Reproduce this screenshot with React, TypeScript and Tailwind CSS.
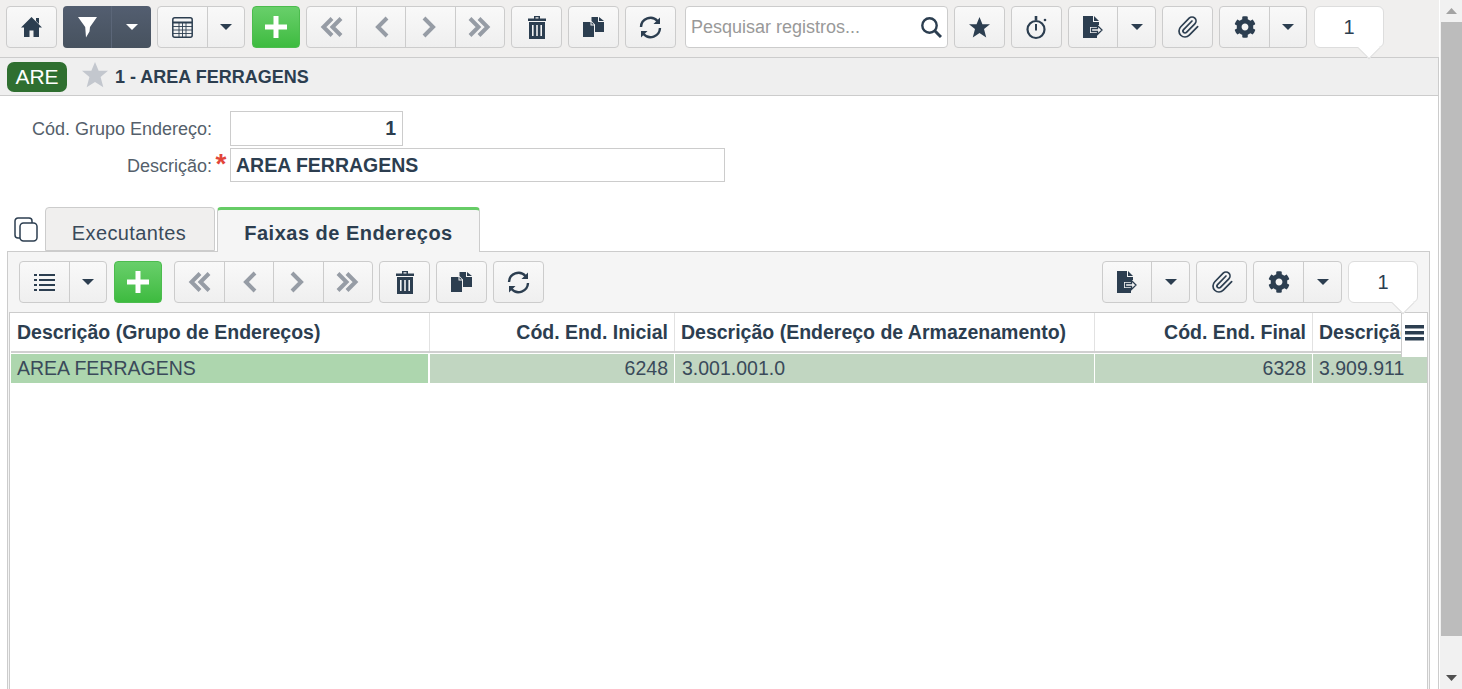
import React from "react";
import { FaCog } from "react-icons/fa";
import { Paperclip } from "lucide-react";

const INK = "#2c3e50";

// toolbar icons that the icon font of the original draws differently
function Home() {
  return (
    <svg width="21" height="20" viewBox="0 0 21 20" fill={INK}>
      <path d="M10.500 0 21 10.500h-3V20h-5.500v-6.500h-4V20H3v-9.500H0z" />
      <path d="M15 1h3v6l-3-3z" />
    </svg>
  );
}
function Funnel() {
  return (
    <svg width="19" height="22" viewBox="0 0 19 22">
      <path d="M0 1h19l-7 10-.5 4.500L8 21.500 7.200 11z" fill="#fff" />
    </svg>
  );
}
function TableIcon() {
  return (
    <svg width="21" height="21" viewBox="0 0 21 21" fill="none" stroke={INK}>
      <rect x="0.800" y="0.800" width="19.400" height="19.400" rx="2" strokeWidth="1.500" />
      <path d="M1 5.500h19" strokeWidth="2" />
      <path d="M1 9.500h19M1 13h19M1 16.500h19M7 6v14M10.500 6v14M14 6v14" strokeWidth="0.900" />
    </svg>
  );
}
function Chevrons({ dir, double }: { dir: "l" | "r"; double?: boolean }) {
  const flip = dir === "r" ? "scale(-1 1) translate(-24 0)" : undefined;
  return (
    <svg width="24" height="22" viewBox="0 0 24 22" fill="none" stroke="#969ca5" strokeWidth="4">
      <g transform={flip}>
        {double ? (
          <>
            <path d="M13 2.500 4.500 11l8.500 8.500" />
            <path d="M22 2.500 13.500 11l8.500 8.500" />
          </>
        ) : (
          <path d="M18 2 9 11l9 9" />
        )}
      </g>
    </svg>
  );
}
function Trash() {
  return (
    <svg width="18" height="23" viewBox="0 0 18 23" fill={INK}>
      <path d="M6 0h6v2.500h6V5H0V2.500h6zM7.500 1.200v1.300h3V1.200z" fillRule="evenodd" />
      <path d="M1 6h16v17H1zM4 9v11h1.600V9zM8.200 9v11h1.600V9zM12.400 9v11H14V9z" fillRule="evenodd" />
    </svg>
  );
}
function Copies() {
  return (
    <svg width="22" height="20" viewBox="0 0 22 20" fill={INK}>
      <path d="M0 5h7.500v3.500H11V20H0z" />
      <path d="M8.500 5 11 7.500H8.500z" />
      <path d="M8.500 0H15v5h6v10h-9V7.500L8.500 4z" />
      <path d="M16 0l5 4h-5z" />
    </svg>
  );
}
function Refresh() {
  return (
    <svg width="23" height="23" viewBox="0 0 23 23" fill="none" stroke={INK} strokeWidth="2.400">
      <path d="M2 11a9.500 9.500 0 0 1 16.500-6" />
      <path d="M21 12a9.500 9.500 0 0 1-16.500 6" />
      <path d="M21 1.500V8h-6.500z" fill={INK} stroke="none" />
      <path d="M2 21.500V15h6.500z" fill={INK} stroke="none" />
    </svg>
  );
}
function Stopwatch() {
  return (
    <svg width="22" height="25" viewBox="0 0 22 25" fill="none" stroke={INK}>
      <circle cx="10" cy="14.500" r="8.500" strokeWidth="2.200" />
      <path d="M10 1v4" strokeWidth="2.600" />
      <path d="M10 9v6.500" strokeWidth="2" />
      <circle cx="19" cy="5" r="1.300" fill={INK} stroke="none" />
    </svg>
  );
}
function ExportDoc() {
  return (
    <svg width="20" height="22" viewBox="0 0 20 22" fill={INK}>
      <path d="M0 0h10v6h6v3h-2v2H7v6h7v5H0z" />
      <path d="M11 0l5 5h-5z" />
      <path d="M8.500 12.500h6V9.500l4.500 4.500-4.500 4.500V15.500h-6z" fill="none" stroke={INK} strokeWidth="1.300" />
    </svg>
  );
}
function ListIcon() {
  return (
    <svg width="21" height="19" viewBox="0 0 21 19" fill={INK}>
      <path d="M0 1h3v2H0zM5 1h16v2H5zM0 6h3v2H0zM5 6h16v2H5zM0 11h3v2H0zM5 11h16v2H5zM0 16h3v2H0zM5 16h16v2H5z" />
    </svg>
  );
}
function Star({ size, color }: { size: number; color: string }) {
  return (
    <svg width={size} height={size} viewBox="0 0 20 20" fill={color}>
      <path d="M10 0l2.800 6.800H20l-5.700 4.700L16.400 19.500 10 15.300l-6.400 4.200 2.100-8L0 6.800h7.200z" />
    </svg>
  );
}
function Search() {
  return (
    <svg width="21" height="21" viewBox="0 0 21 21" fill="none" stroke={INK}>
      <circle cx="8.500" cy="8.500" r="7.200" strokeWidth="2.400" />
      <path d="M13.500 13.500 20 20" strokeWidth="3" />
    </svg>
  );
}
function Caret({ white }: { white?: boolean }) {
  return (
    <svg width="12" height="6" viewBox="0 0 12 6">
      <path d="M0 0h12L6 6z" fill={white ? "#fff" : INK} />
    </svg>
  );
}

const btn = "flex h-[42px] items-center justify-center bg-linear-to-b from-[#f9f9f9] to-[#efefef]";

function Btn({ children }: { children: React.ReactNode }) {
  return <div className={`${btn} w-[51px] shrink-0 rounded-[4px] border border-[#cccccc]`}>{children}</div>;
}

function Split({ children, w = "w-[88px]", first = "w-[49px]" }: { children: React.ReactNode; w?: string; first?: string }) {
  return (
    <div className={`${btn} ${w} shrink-0 rounded-[4px] border border-[#cccccc]`}>
      <div className={`flex h-full ${first} items-center justify-center border-r border-[#cccccc]`}>{children}</div>
      <div className="flex flex-1 items-center justify-center">
        <Caret />
      </div>
    </div>
  );
}

function AddBtn() {
  return (
    <div className="ml-[1px] flex h-[42px] w-[48px] shrink-0 items-center justify-center rounded-[4px] border border-[#4cbc4e] bg-linear-to-b from-[#68cf6a] to-[#3dbb3f]">
      <svg width="22" height="22" viewBox="0 0 22 22" fill="#fff">
        <path d="M8.500 0h5v8.500H22v5h-8.500V22h-5v-8.500H0v-5h8.500z" />
      </svg>
    </div>
  );
}

function Nav() {
  const cell = "flex h-full flex-1 items-center justify-center border-r border-[#cccccc] last:border-r-0";
  return (
    <div className={`${btn} w-[199px] shrink-0 rounded-[4px] border border-[#cccccc]`}>
      <div className={cell}><Chevrons dir="l" double /></div>
      <div className={cell}><Chevrons dir="l" /></div>
      <div className={cell}><Chevrons dir="r" /></div>
      <div className={cell}><Chevrons dir="r" double /></div>
    </div>
  );
}

function Counter() {
  return (
    <div className="relative flex h-[42px] w-[70px] shrink-0 items-center justify-center rounded-[6px] border border-[#dddddd] bg-white text-[20px] text-[#2c3e50]">
      1
      <span className="absolute -bottom-[9px] left-[46px] h-[16px] w-[16px] rotate-45 border-r border-b border-[#dddddd] bg-white" />
    </div>
  );
}

const columns = "grid grid-cols-[419px_245px_420px_218px_114px]";

export default function App() {
  return (
    <div className="flex h-[689px] w-[1462px] overflow-hidden bg-white font-['Liberation_Sans',Arial,sans-serif] text-[#2c3e50]">
      <div className="flex w-[1439px] shrink-0 flex-col">
        {/* main toolbar */}
        <div className="relative z-10 flex h-[57px] shrink-0 gap-[6px] bg-[#f0efee] pt-[6px] pl-[6px]">
          <Btn><Home /></Btn>
          <div className="flex h-[42px] w-[88px] shrink-0 items-center rounded-[4px] bg-linear-to-b from-[#535e70] to-[#47525f]">
            <div className="flex h-full w-[49px] items-center justify-center border-r border-[#5b6678]"><Funnel /></div>
            <div className="flex flex-1 items-center justify-center"><Caret white /></div>
          </div>
          <Split first="w-[50px]"><TableIcon /></Split>
          <AddBtn />
          <Nav />
          <Btn><Trash /></Btn>
          <Btn><Copies /></Btn>
          <Btn><Refresh /></Btn>
          <div className="ml-[3px] flex h-[42px] w-[263px] shrink-0 items-center justify-between rounded-[4px] border border-[#cccccc] bg-white px-[5px] text-[18px] text-[#999999]">
            <span className="pt-[1px]">Pesquisar registros...</span>
            <Search />
          </div>
          <Btn><Star size={21} color={INK} /></Btn>
          <Btn><Stopwatch /></Btn>
          <Split><ExportDoc /></Split>
          <Btn><Paperclip size={24} color={INK} strokeWidth={1.7} /></Btn>
          <Split first="w-[50px]"><FaCog size={22} color={INK} /></Split>
          <div className="ml-[1px]"><Counter /></div>
        </div>

        {/* record header */}
        <div className="flex h-[39px] shrink-0 items-center border-y border-r border-[#cccccc] bg-[#efefef] pl-[7px]">
          <span className="flex h-[30px] w-[60px] items-center justify-center rounded-[7px] bg-[#2f6f30] text-[21px] text-white">ARE</span>
          <span className="mr-[7px] mb-[4px] ml-[15px]"><Star size={26} color="#c3c7ce" /></span>
          <span className="pt-[1px] text-[18px] font-bold">1 - AREA FERRAGENS</span>
        </div>

        {/* form and detail */}
        <div className="flex min-h-0 flex-1 flex-col border-r border-[#cccccc] pt-[15px]">
          <div className="flex h-[35px] items-center">
            <label className="w-[212px] pt-[1px] text-right text-[18px] text-[#555f6b]">Cód. Grupo Endereço:</label>
            <div className="ml-[18px] flex h-[35px] w-[173px] items-center justify-end border border-[#cccccc] pt-[1px] pr-[6px] text-[19.5px] font-bold">1</div>
          </div>
          <div className="mt-[2px] flex h-[34px] items-center">
            <label className="w-[212px] pt-[2px] text-right text-[18px] text-[#555f6b]">Descrição:</label>
            <span className="flex h-full w-[18px] justify-center pt-[2px] text-[28px] leading-[28px] font-bold text-[#e2453a]">*</span>
            <div className="flex h-[34px] w-[495px] items-center border border-[#cccccc] pt-[1px] pl-[5px] text-[19.5px] font-bold">AREA FERRAGENS</div>
          </div>

          {/* tabs */}
          <div className="mt-[25px] flex h-[44px] shrink-0 items-end pl-[14px]">
            <svg width="24" height="25" viewBox="0 0 24 25" fill="none" stroke={INK} strokeWidth="1.500" className="mr-[7px] mb-[9px] shrink-0">
              <rect x="6" y="6" width="17" height="18" rx="3.500" />
              <path d="M6 21H4a3 3 0 0 1-3-3V4a3 3 0 0 1 3-3h11a3 3 0 0 1 3 3v2" />
            </svg>
            <div className="flex h-[44px] w-[170px] items-center justify-center rounded-t-[4px] border border-[#cccccc] bg-[#f0efee] pt-[8px] pr-[2px] text-[20px] tracking-[0.4px] text-[#3a4a5a]">Executantes</div>
            <div className="relative z-10 ml-[2px] -mb-[1px] flex h-[45px] w-[263px] items-center justify-center rounded-t-[4px] border-x border-[#cccccc] border-t-[3px] border-t-[#66cc66] bg-[#f5f5f5] pt-[3px] text-[20px] font-bold tracking-[0.5px]">Faixas de Endereços</div>
          </div>

          {/* detail panel */}
          <div className="ml-[7px] flex min-h-0 w-[1423px] flex-1 flex-col border-x border-t border-[#cccccc] bg-[#f5f5f5]">
            <div className="relative z-10 flex h-[60px] shrink-0 gap-[6px] pt-[9px] pl-[11px]">
              <Split first="w-[50px]"><ListIcon /></Split>
              <AddBtn />
              <div className="ml-[6px]"><Nav /></div>
              <Btn><Trash /></Btn>
              <Btn><Copies /></Btn>
              <Btn><Refresh /></Btn>
              <div className="flex-1" />
              <Split><ExportDoc /></Split>
              <Btn><Paperclip size={24} color={INK} strokeWidth={1.7} /></Btn>
              <Split w="w-[89px]" first="w-[50px]"><FaCog size={22} color={INK} /></Split>
              <div className="mr-[11px]"><Counter /></div>
            </div>

            {/* grid */}
            <div className="relative mx-[1px] min-h-0 flex-1 border-x border-t border-[#cccccc] bg-white pl-[1px]">
              <div className={`${columns} h-[40px] border-b-2 border-[#d0d0d0] text-[19.5px] font-bold`}>
                <div className="flex items-center border-r border-[#e2e2e2] pt-[1px] pl-[6px]">Descrição (Grupo de Endereços)</div>
                <div className="flex items-center justify-end border-r border-[#e2e2e2] pt-[1px] pr-[6px]">Cód. End. Inicial</div>
                <div className="flex items-center border-r border-[#e2e2e2] pt-[1px] pl-[6px]">Descrição (Endereço de Armazenamento)</div>
                <div className="flex items-center justify-end border-r border-[#e2e2e2] pt-[1px] pr-[6px]">Cód. End. Final</div>
                <div className="flex items-center overflow-hidden pt-[1px] pl-[6px] whitespace-nowrap">Descrição (Endereço)</div>
              </div>
              <div className={`${columns} mt-[1px] h-[28px] text-[19.5px] text-[#3a4a5a]`}>
                <div className="flex items-center border-r-2 border-white bg-[#add6ae] pl-[6px]">AREA FERRAGENS</div>
                <div className="flex items-center justify-end border-r border-white bg-[#c1d6c1] pr-[6px]">6248</div>
                <div className="flex items-center border-r border-white bg-[#c1d6c1] pl-[7px]">3.001.001.0</div>
                <div className="flex items-center justify-end border-r border-white bg-[#c1d6c1] pr-[6px]">6328</div>
                <div className="flex items-center bg-[#c1d6c1] pl-[6px]">3.909.911</div>
              </div>
              {/* column menu */}
              <div className="absolute top-0 right-0 flex h-[44px] w-[26px] items-start justify-center border-l border-[#cccccc] bg-white pt-[12px]">
                <svg width="19" height="16" viewBox="0 0 19 16" fill={INK}>
                  <path d="M0 0h19v3.500H0zM0 6h19v3.500H0zM0 12h19v3.500H0z" />
                </svg>
              </div>
            </div>
          </div>
        </div>
      </div>

      {/* page scrollbar */}
      <div className="flex w-[23px] shrink-0 flex-col items-stretch border-l border-white bg-[#f1f1f1]">
        <div className="flex h-[22px] items-center justify-center">
          <svg width="11" height="6" viewBox="0 0 11 6"><path d="M0 6h11L5.500 0z" fill="#a3a3a3" /></svg>
        </div>
        <div className="ml-[1px] h-[614px] bg-[#bcbcbc]" />
        <div className="flex flex-1 items-end justify-center pb-[8px]">
          <svg width="11" height="6" viewBox="0 0 11 6"><path d="M0 0h11L5.500 6z" fill="#505050" /></svg>
        </div>
      </div>
    </div>
  );
}
